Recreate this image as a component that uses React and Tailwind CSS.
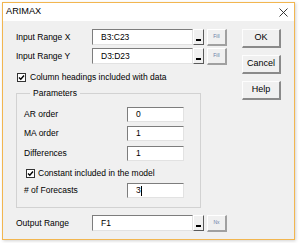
import React from "react";

const font = { fontFamily: '"Liberation Sans", Arial, sans-serif' };

function TextBox({ value, w, h = "h-[16px]", cursor }) {
  return (
    <div
      className={`${w} ${h} bg-white border-t border-l border-t-[#7d7d7d] border-l-[#7d7d7d] border-r border-b border-r-[#e2e2e2] border-b-[#e2e2e2] flex items-center pl-[8px] text-[8.5px] text-black`}
    >
      {value}
      {cursor && <span className="inline-block w-px h-[10px] bg-black" />}
    </div>
  );
}

function DotButton() {
  return (
    <div className="w-[11px] h-[16px] bg-[#f0f0f0] border-t border-l border-t-white border-l-white border-r border-b border-r-[#5a5a5a] border-b-[#5a5a5a] flex items-end justify-center pb-[3px]">
      <div className="w-[5px] h-[2px] bg-black" />
    </div>
  );
}

function SmallButton({ label }) {
  return (
    <div className="ml-[3px] w-[20px] h-[17px] bg-[#f0f0f0] border-t border-l border-t-white border-l-white border-r-2 border-b-2 border-r-[#a0a0a0] border-b-[#a0a0a0] flex items-center justify-center text-[5px] text-[#6b7fa6]">
      {label}
    </div>
  );
}

function Checkbox() {
  return (
    <div className="w-[9px] h-[9px] bg-white border border-[#333] flex items-center justify-center">
      <svg width="7" height="7" viewBox="0 0 7 7">
        <path d="M1 3.5 L2.8 5.3 L6 1.5" fill="none" stroke="#000" strokeWidth="1.4" />
      </svg>
    </div>
  );
}

function BigButton({ label, className = "" }) {
  return (
    <div
      className={`w-[39px] h-[19px] bg-[#f0f0f0] border-t border-l border-t-[#fdfdfd] border-l-[#fdfdfd] border-r-2 border-b-2 border-r-[#8a8a8a] border-b-[#8a8a8a] flex items-center justify-center text-[9px] text-black ${className}`}
    >
      {label}
    </div>
  );
}

export default function App() {
  return (
    <div className="w-[300px] h-[243px] bg-white overflow-hidden" style={font}>
      <div className="ml-[2px] mt-[2px] w-[293px] h-[238px] border border-[#f2b650] bg-[#f0f0f0] flex flex-col shadow-[1px_1px_3px_rgba(0,0,0,0.18)]">
        <div className="h-[18px] bg-white flex items-center justify-between pl-[3px] pr-[6px]">
          <span className="text-[9.2px] text-black">ARIMAX</span>
          <svg width="9" height="9" viewBox="0 0 9 9">
            <path d="M0.5 0.5 L8.5 8.5 M8.5 0.5 L0.5 8.5" stroke="#222" strokeWidth="0.9" />
          </svg>
        </div>
        <div className="flex-1 flex pt-[8px] pl-[13px] text-[8.5px] text-black">
          <div className="w-[212px] flex flex-col">
            <div className="h-[16px] flex items-center">
              <div className="w-[76px]">Input Range X</div>
              <TextBox value="B3:C23" w="w-[101px]" />
              <DotButton />
              <SmallButton label="Fill" />
            </div>
            <div className="mt-[3px] h-[16px] flex items-center">
              <div className="w-[76px]">Input Range Y</div>
              <TextBox value="D3:D23" w="w-[101px]" />
              <DotButton />
              <SmallButton label="Fill" />
            </div>
            <div className="mt-[8px] h-[10px] flex items-center">
              <div className="ml-[1px]">
                <Checkbox />
              </div>
              <div className="ml-[4px]">Column headings included with data</div>
            </div>
            <fieldset className="mt-[6px] w-[185px] border border-[#d2d2d2] pb-[9px] pl-[7px]">
              <legend className="ml-[6px] px-[3px] leading-[11px]">Parameters</legend>
              <div className="mt-[8px] h-[15px] flex items-center">
                <div className="w-[103px]">AR order</div>
                <TextBox value="0" w="w-[57px]" h="h-[15px]" />
              </div>
              <div className="mt-[4px] h-[15px] flex items-center">
                <div className="w-[103px]">MA order</div>
                <TextBox value="1" w="w-[57px]" h="h-[15px]" />
              </div>
              <div className="mt-[5px] h-[15px] flex items-center">
                <div className="w-[103px]">Differences</div>
                <TextBox value="1" w="w-[57px]" h="h-[15px]" />
              </div>
              <div className="mt-[8px] h-[9px] flex items-center">
                <div className="ml-[2px]">
                  <Checkbox />
                </div>
                <div className="ml-[3px]">Constant included in the model</div>
              </div>
              <div className="mt-[5px] h-[15px] flex items-center">
                <div className="w-[103px]"># of Forecasts</div>
                <TextBox value="3" w="w-[57px]" h="h-[15px]" cursor />
              </div>
            </fieldset>
            <div className="mt-[7px] h-[16px] flex items-center">
              <div className="w-[76px]">Output Range</div>
              <TextBox value="F1" w="w-[101px]" />
              <DotButton />
              <SmallButton label="Nx" />
            </div>
          </div>
          <div className="ml-[14px] flex flex-col">
            <BigButton label="OK" />
            <BigButton label="Cancel" className="mt-[7px]" />
            <BigButton label="Help" className="mt-[7px]" />
          </div>
        </div>
      </div>
    </div>
  );
}
